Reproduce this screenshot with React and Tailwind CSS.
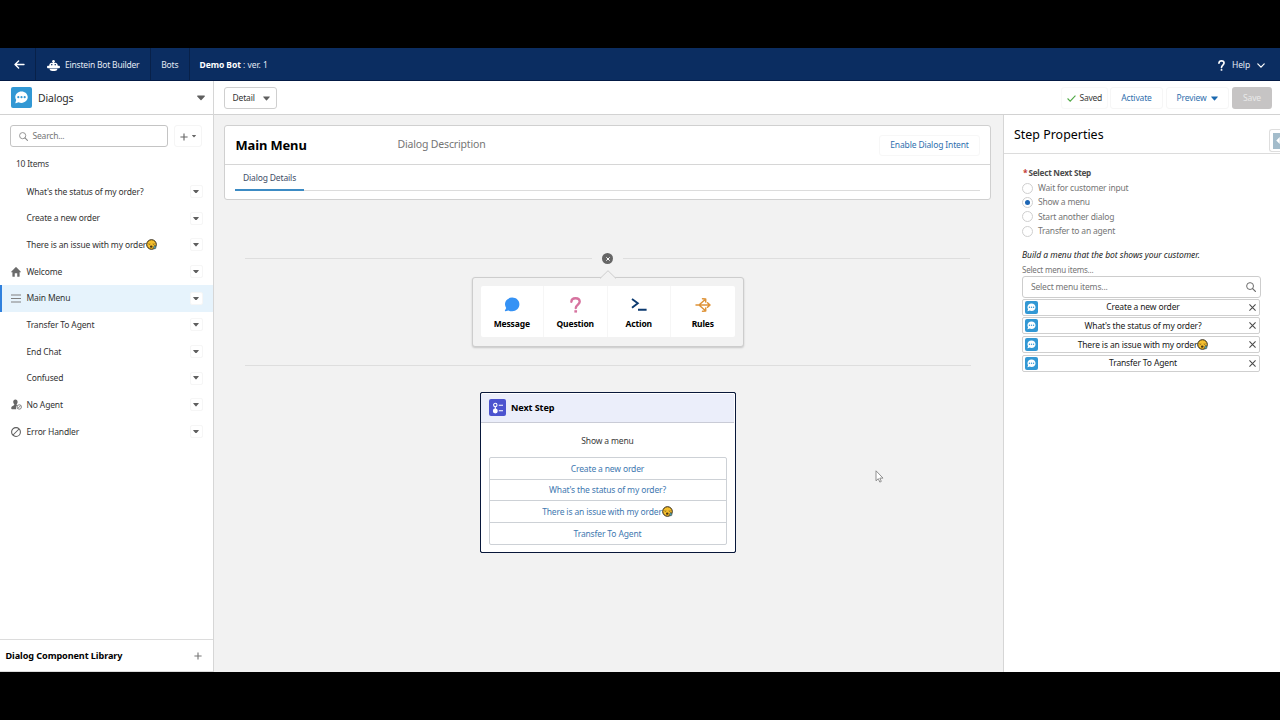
import React from "react";

function Caret({ className = "" }) {
  return (
    <svg viewBox="0 0 10 6" className={className} fill="currentColor">
      <path d="M0.8 0h8.4c.6 0 .9.6.5 1L5.6 5.6c-.3.4-.9.4-1.200 0L.3 1C-.1.6.2 0 .8 0z" />
    </svg>
  );
}

function Bubble({ className = "" }) {
  return (
    <svg viewBox="0 0 24 24" className={className}>
      <path fill="#fff" d="M12 3.500c-5 0-8.800 3.500-8.800 7.900 0 1.500.5 3 1.300 4.200l-1.200 4c-.1.400.2.700.600.600l4-1.500c1.200.6 2.600.9 4.100.9 5 0 8.800-3.700 8.800-8.200S17 3.500 12 3.500z" />
      <g fill="#3298d4">
        <circle cx="7.500" cy="11.500" r="1.500" />
        <circle cx="12" cy="11.500" r="1.500" />
        <circle cx="16.500" cy="11.500" r="1.500" />
      </g>
    </svg>
  );
}

function SleepyFace() {
  return (
    <svg viewBox="0 0 22 22" className="h-[11px] w-[11px] shrink-0" role="img" aria-label="😪">
      <circle cx="11" cy="11" r="9.600" fill="#f5bf2d" stroke="#2a2210" strokeWidth="2" />
      <path d="M5 9.800c1 .9 2.500.9 3.500 0M13.500 9.800c1 .9 2.500.9 3.500 0" stroke="#4a3a14" strokeWidth="1.400" fill="none" />
      <ellipse cx="10.500" cy="15.300" rx="2.600" ry="2.200" fill="#4a3410" />
      <path d="M17.500 12.500c1.700 2.300 2.500 3.500 2.500 4.700a2.500 2.500 0 0 1-5 0c0-1.200 1-2.400 2.500-4.700z" fill="#4f9cae" stroke="#2a2a20" strokeWidth=".8" />
    </svg>
  );
}

function SearchIcon({ className = "" }) {
  return (
    <svg viewBox="0 0 16 16" className={className} fill="none" stroke="currentColor">
      <circle cx="6.500" cy="6.500" r="5.500" strokeWidth="1.600" />
      <path d="M10.600 10.600L15 15" strokeWidth="1.900" strokeLinecap="round" />
    </svg>
  );
}

function PlusIcon({ className = "" }) {
  return (
    <svg viewBox="0 0 10 10" className={className} stroke="currentColor" strokeWidth="1.400">
      <path d="M5 .5v9M.5 5h9" />
    </svg>
  );
}

const ORDER_ISSUE = "There is an issue with my order";

const rowIcons = {
  home: (
    <svg viewBox="0 0 20 20" className="h-[10px] w-[10px]" fill="#6b6b6b">
      <path d="M10.800.6a1.200 1.200 0 0 0-1.600 0L.4 9.300c-.6.6-.2 1.200.4 1.200h2v7.800c0 .7.5 1.200 1.200 1.200h3.500v-6.200c0-.5.400-.8.800-.8h3.400c.5 0 .8.300.8.800v6.200H16c.7 0 1.200-.5 1.200-1.200v-7.800h2c.6 0 1-.6.4-1.200z" />
    </svg>
  ),
  menu: (
    <svg viewBox="0 0 10 9" className="h-[9px] w-[10px]" stroke="#808080" strokeWidth="1.100">
      <path d="M0 1h10M0 4.500h10M0 8h10" />
    </svg>
  ),
  agent: (
    <svg viewBox="0 0 20 20" className="h-[11px] w-[11px]">
      <path fill="#666" d="M8 1C5.500 1 4 2.900 4 5.400c0 1.700.8 3.300 1.900 4.300.4.900-.1 1.500-1.300 2C2.300 12.700.5 13.700.5 15.800v1.400c0 .7.500 1.300 1.300 1.300h7.700c-.8-3.200.3-6.200 2.300-7.400-1.600-.5-2-.7-1.700-1.400C11.200 8.700 12 7.100 12 5.400 12 2.900 10.500 1 8 1z" />
      <circle cx="15" cy="14.500" r="4" fill="none" stroke="#666" strokeWidth="1.400" />
      <path d="M12.500 17l5-5" stroke="#666" strokeWidth="1.400" />
    </svg>
  ),
  blocked: (
    <svg viewBox="0 0 20 20" className="h-[10px] w-[10px]" fill="none" stroke="#5c5c5c" strokeWidth="2.100">
      <circle cx="10" cy="10" r="8.800" />
      <path d="M4 16L16 4" />
    </svg>
  ),
};

const dialogs = [
  { label: "What's the status of my order?" },
  { label: "Create a new order" },
  { label: ORDER_ISSUE, face: true },
  { label: "Welcome", icon: "home" },
  { label: "Main Menu", icon: "menu", active: true },
  { label: "Transfer To Agent" },
  { label: "End Chat" },
  { label: "Confused" },
  { label: "No Agent", icon: "agent" },
  { label: "Error Handler", icon: "blocked" },
];

const menuItems = [
  { label: "Create a new order" },
  { label: "What's the status of my order?" },
  { label: ORDER_ISSUE, face: true },
  { label: "Transfer To Agent" },
];

function TopBar() {
  return (
    <header className="flex h-[33px] shrink-0 items-stretch border-b border-[#031a45] bg-[#0b2d61] text-[#e4eaf4]">
      <div className="flex w-[36px] items-center justify-center border-r border-[#082149] pt-px pl-[3px]">
        <svg viewBox="0 0 12 10" className="h-[9px] w-[11px]" fill="none" stroke="#fff" strokeWidth="1.500" strokeLinecap="round" strokeLinejoin="round">
          <path d="M11 5H1.200M5 1L1 5l4 4" />
        </svg>
      </div>
      <div className="flex w-[115px] items-center border-r border-[#082149] pt-[2px] pl-[11px]">
        <svg viewBox="0 0 26 22" className="mr-[5px] h-[11px] w-[13px]" fill="#fff">
          <circle cx="13" cy="2.600" r="2.600" />
          <path d="M12 3h2v4h-2z" />
          <path fillRule="evenodd" d="M10 5.500h6c3.500 0 5.500 2.500 5.500 5.500v1.500h-17V11C4.500 8 6.500 5.500 10 5.500zM9.500 8a1.600 1.600 0 1 0 0 3.200 1.600 1.600 0 0 0 0-3.200zm7 0a1.600 1.600 0 1 0 0 3.200 1.600 1.600 0 0 0 0-3.200z" />
          <path d="M2.500 11.500h21c1.500 0 2.500 1 2.500 2.500s-1 2.500-2.500 2.500h-21C1 16.500 0 15.500 0 14s1-2.500 2.500-2.500zM5 17.500h16c-.6 2.800-2.600 4.500-5.500 4.500h-5C7.600 22 5.600 20.300 5 17.500z" />
        </svg>
        <span className="tracking-[-0.200px]">Einstein Bot Builder</span>
      </div>
      <div className="flex w-[38.500px] items-center justify-center border-r border-[#082149] pt-[2px]">Bots</div>
      <div className="flex flex-1 items-center whitespace-pre pt-[2px] pl-[10px] tracking-[-0.050px]">
        <b className="text-white">Demo Bot</b> : ver. 1
      </div>
      <div className="flex items-center pt-[2px] pr-[15px]">
        <svg viewBox="0 0 10 16" className="mr-[7px] h-[11px] w-[7px]" fill="none" stroke="#fff" strokeWidth="2.400">
          <path d="M1.300 4.500C1.500 2.500 3 1.300 5 1.300s3.700 1.200 3.700 3.200C8.700 7.300 5 7.500 5 11" strokeLinecap="round" />
          <path d="M5 13.200v2.400" />
        </svg>
        <span>Help</span>
        <svg viewBox="0 0 10 6" className="ml-[7px] h-[5px] w-[8px]" fill="none" stroke="#fff" strokeWidth="1.500" strokeLinecap="round">
          <path d="M1 1l4 4 4-4" />
        </svg>
      </div>
    </header>
  );
}

function Sidebar() {
  return (
    <aside className="flex w-[214px] shrink-0 flex-col border-r border-[#d6d6d6] bg-white">
      <div className="flex h-[34px] shrink-0 items-center border-b border-[#d2d2d2] pr-[8.500px] pl-[11px]">
        <span className="flex h-[21px] w-[21px] items-center justify-center rounded-[2px] bg-[#3298d4]">
          <Bubble className="h-[17px] w-[17px]" />
        </span>
        <span className="ml-[6px] flex-1 text-[10.400px] tracking-[-0.150px] text-[#2b2b2b]">Dialogs</span>
        <Caret className="h-[6px] w-[8px] text-[#5f5f5f]" />
      </div>
      <div className="mt-[10px] flex items-center pl-[10px]">
        <div className="flex h-[22px] w-[158px] items-center rounded-[3px] border border-[#c4c4c4] pl-[8px] tracking-[-0.200px] text-[#757575]">
          <SearchIcon className="mr-[4.500px] h-[9px] w-[9px] text-[#8a8a8a]" />
          Search...
        </div>
        <div className="ml-[6px] flex h-[22px] w-[28px] items-center justify-center rounded-[3px] border border-[#f5f5f5] pt-px text-[#666]">
          <PlusIcon className="mr-[4px] h-[8px] w-[8px]" />
          <Caret className="h-[2.500px] w-[4px]" />
        </div>
      </div>
      <div className="mt-[9px] h-[16px] pl-[16px] leading-[16px] tracking-[-0.250px] text-[#3a3a3a]">10 Items</div>
      <ul className="mt-[6.300px]">
        {dialogs.map((d) => (
          <li
            key={d.label}
            className={
              "flex h-[26.670px] items-center border-l-[2.500px] pr-[10.500px] pl-[9px] " +
              (d.active ? "border-[#2f80dd] bg-[#e6f3fc]" : "border-transparent")
            }
          >
            <span className="flex w-[15.500px] items-center">{d.icon && rowIcons[d.icon]}</span>
            <span className="flex flex-1 items-center">
              {d.label}
              {d.face && <SleepyFace />}
            </span>
            <span className="flex h-[13px] w-[13px] items-center justify-center rounded-[2px] border border-[#f6f6f6] bg-white text-[#5f5f5f]">
              <Caret className="h-[3.500px] w-[6px]" />
            </span>
          </li>
        ))}
      </ul>
      <div className="mt-auto flex h-[33px] items-center justify-between border-y border-t-[#dcdcdc] border-b-[#dcdcdc] pr-[11px] pl-[5.500px]">
        <b className="text-[9.100px] tracking-[-0.080px] text-black">Dialog Component Library</b>
        <PlusIcon className="h-[8px] w-[8px] text-[#777]" />
      </div>
    </aside>
  );
}

function Toolbar() {
  return (
    <div className="flex h-[34px] shrink-0 items-center border-b border-[#d2d2d2] bg-white pr-[8px] pl-[10px]">
      <div className="flex h-[22px] w-[53px] items-center justify-between rounded-[3px] border border-[#cfcfcf] pt-px pr-[6px] pl-[7.500px]">
        Detail
        <Caret className="h-[5px] w-[7px] text-[#5f5f5f]" />
      </div>
      <div className="ml-auto flex h-[22px] text-[#2f6fae]">
        <div className="flex w-[47px] items-center justify-end rounded-[3px] border border-[#f8f8f8] pt-px pr-[5px] tracking-[-0.250px] text-[#3a3a3a]">
          <svg viewBox="0 0 10 8" className="mr-[3px] h-[7px] w-[9px]" fill="none" stroke="#4fa845" strokeWidth="1.300">
            <path d="M.5 4l3 3L9.500.8" />
          </svg>
          Saved
        </div>
        <div className="ml-[2px] flex w-[53px] items-center justify-center rounded-[3px] border border-[#f6f6f6] pt-px">Activate</div>
        <div className="ml-[3px] flex w-[63px] items-center justify-center rounded-[3px] border border-[#f6f6f6] pt-px">
          Preview
          <Caret className="ml-[5px] h-[5px] w-[7px] text-[#1b69b0]" />
        </div>
        <div className="ml-[3px] flex w-[40px] items-center justify-center rounded-[3px] bg-[#c6c4c4] pt-px text-[#e9e9e9]">Save</div>
      </div>
    </div>
  );
}

const stepTypes = [
  {
    label: "Message",
    icon: (
      <svg viewBox="0 0 16 15" className="h-[15px] w-[16px]" fill="#3592f5">
        <path d="M8.200.6C4.200.6 1 3.500 1 7.100c0 1.400.5 2.800 1.200 3.900L.9 13.600c-.2.400.1.800.6.700l2.900-.9c1.100.6 2.400.9 3.800.9 4 0 7.200-3.200 7.200-7S12.200.6 8.200.6z" />
      </svg>
    ),
  },
  {
    label: "Question",
    icon: (
      <svg viewBox="0 0 11 16" className="h-[16px] w-[11px]" fill="none" stroke="#d6739f" strokeWidth="2.400">
        <path d="M1.400 4.700C1.500 2.400 3.200 1.300 5.500 1.300S9.700 2.600 9.700 4.800C9.700 7.400 6 7.800 5.800 11" strokeLinecap="round" />
        <path d="M5.700 13.200v2.400" strokeWidth="2.700" />
      </svg>
    ),
  },
  {
    label: "Action",
    icon: (
      <svg viewBox="0 0 16 13" className="h-[13px] w-[16px]" fill="none" stroke="#0c3a70" strokeWidth="1.900">
        <path d="M1 1l5.800 4.300L1 9.700M7 11.700h8.600" />
      </svg>
    ),
  },
  {
    label: "Rules",
    icon: (
      <svg viewBox="0 0 16 16" className="h-[16px] w-[16px]" fill="none" stroke="#de9338" strokeWidth="1.500" strokeLinecap="round" strokeLinejoin="round">
        <path d="M1 8h13.500M12.500 5.700L15 8l-2.500 2.300M4 8l6.500-5.800M7.500 1.700l3.200.2v3M4 8l6.500 5.800M7.500 14.300l3.200-.2v-3" />
      </svg>
    ),
  },
];

function Canvas() {
  return (
    <main className="flex min-w-0 flex-1 flex-col bg-[#f2f2f2] pt-[10px] pr-[12px] pl-[10px]">
      <section className="h-[75px] shrink-0 rounded-[3px] border border-[#d0d0d0] bg-white">
        <div className="flex h-[39px] items-center border-b border-[#d6d6d6] pr-[10px] pl-[10.500px]">
          <b className="w-[162px] text-[12.900px] tracking-[-0.100px] text-black">Main Menu</b>
          <span className="flex-1 pb-[3px] text-[10.500px] tracking-[-0.170px] text-[#757575]">Dialog Description</span>
          <span className="flex h-[21px] w-[101px] items-center justify-center rounded-[3px] border border-[#f7f7f7] text-[#2f6fae]">Enable Dialog Intent</span>
        </div>
        <div className="mx-[10px] flex h-[26px] border-b border-[#dcdcdc]">
          <span className="-mb-px flex w-[69px] items-center justify-center border-b-2 border-[#3c8bc4] pt-px text-[#3e4d66]">Dialog Details</span>
        </div>
      </section>

      <div className="mt-[50px] flex h-[17px] items-center justify-center">
        <span className="h-px w-[347px] bg-[#dedede]" />
        <span className="mx-[10px] flex h-[11px] w-[11px] items-center justify-center rounded-full bg-[#666]">
          <svg viewBox="0 0 6 6" className="h-[4px] w-[4px]" stroke="#fff" strokeWidth="1.500">
            <path d="M.5.5l5 5M5.500.5l-5 5" />
          </svg>
        </span>
        <span className="h-px w-[347px] bg-[#dedede]" />
      </div>

      <div className="relative mx-auto mt-[10px] h-[70px] w-[272px] rounded-[3px] border border-[#cdcdcd] bg-[#f2f2f2] p-[8px] shadow-[0_1px_2px_rgba(0,0,0,0.180)]">
        <svg viewBox="0 0 16 9" className="absolute -top-[8.500px] left-[127px] h-[9px] w-[16px]">
          <path d="M0 8.500L8 .7l8 7.800" fill="#f2f2f2" stroke="#cdcdcd" />
        </svg>
        <div className="grid h-[51px] grid-cols-4 divide-x divide-[#f6f6f6] rounded-[2px] bg-white">
          {stepTypes.map((s) => (
            <div key={s.label} className="flex flex-col items-center pt-[10px]">
              <span className="flex h-[17px] items-center">{s.icon}</span>
              <b className="mt-[5px] leading-[12px] text-black">{s.label}</b>
            </div>
          ))}
        </div>
      </div>

      <div className="mx-auto mt-[18px] h-px w-[726px] shrink-0 bg-[#dedede]" />

      <section className="mx-auto mt-[26px] h-[161px] w-[256px] shrink-0 rounded-[2px] border-[1.500px] border-[#08183a] bg-white outline outline-[#08183a]/60 -outline-offset-[1.500px]">
        <div className="m-[0.500px] flex h-[29.500px] items-center border-b border-[#c9cbd6] bg-[#ebeefa] pl-[8px]">
          <span className="flex h-[17px] w-[17px] items-center justify-center rounded-[2px] bg-[#4b53cf]">
            <svg viewBox="0 0 12 12" className="h-[12px] w-[12px]" fill="none" stroke="#fff" strokeWidth="1.100">
              <circle cx="3.300" cy="3" r="1.700" />
              <circle cx="3.300" cy="9" r="1.900" fill="#fff" />
              <path d="M3.300 4.700v3M6.800 3.200H11M6.800 8.800H11" />
            </svg>
          </span>
          <b className="ml-[5px] text-[9.100px] tracking-[-0.100px] text-black">Next Step</b>
        </div>
        <div className="flex h-[33.500px] items-center justify-center pt-px text-[#3a3a3a]">Show a menu</div>
        <ul className="mx-[8px] divide-y divide-[#cdd1d6] rounded-[2px] border border-[#cdd1d6]">
          {menuItems.map((m) => (
            <li key={m.label} className="flex h-[21.600px] items-center justify-center pt-[0.700px] text-[#4178b0]">
              {m.label}
              {m.face && <SleepyFace />}
            </li>
          ))}
        </ul>
      </section>
    </main>
  );
}

const choices = ["Wait for customer input", "Show a menu", "Start another dialog", "Transfer to an agent"];

function Properties() {
  return (
    <aside className="relative w-[277px] shrink-0 overflow-hidden border-l border-[#d6d6d6] bg-white">
      <div className="flex h-[39px] items-center border-b border-[#dcdcdc] pt-px pl-[10px] text-[12.400px] tracking-[0.020px] text-black">Step Properties</div>
      <div className="absolute top-[14px] right-0 flex h-[23px] w-[11px] items-center rounded-l-[3px] border border-r-0 border-[#dedede] bg-white pl-[3px]">
        <span className="flex h-[16px] w-[8px] items-center justify-end bg-[#a3bccb]">
          <svg viewBox="0 0 4 8" className="h-[7px] w-[4px]" fill="#fff">
            <path d="M4 0v8L0 4z" />
          </svg>
        </span>
      </div>
      <div className="pt-[12.500px] pr-[19px] pl-[18px]">
        <div className="mb-[1.500px] flex h-[13px] items-center pl-[1px] text-[#4c4c4c]">
          <b className="mr-[1px] text-[#c23934]">*</b>
          <b className="text-[8.200px] tracking-[-0.250px]">Select Next Step</b>
        </div>
        {choices.map((c) => (
          <div key={c} className="flex h-[14.330px] items-center tracking-[-0.190px] text-[#757575]">
            <span className="mr-[5px] flex h-[11px] w-[11px] items-center justify-center rounded-full border border-[#cfcfcf]">
              {c === "Show a menu" && <span className="h-[5px] w-[5px] rounded-full bg-[#1d66b5]" />}
            </span>
            {c}
          </div>
        ))}
        <div className="mt-[9.500px] h-[14px] leading-[14px] tracking-[-0.040px] text-[#1c1c1c] italic">Build a menu that the bot shows your customer.</div>
        <div className="mt-[1.200px] h-[13px] text-[8px] leading-[13px] tracking-[-0.200px] text-[#757575]">Select menu items...</div>
        <div className="flex h-[22px] w-[239px] items-center justify-between rounded-[3px] border border-[#cdcdcd] pr-[4px] pl-[8px] tracking-[-0.180px] text-[#757575]">
          Select menu items...
          <SearchIcon className="h-[10px] w-[10px] text-[#6a6a6a]" />
        </div>
        <div className="mt-[0.800px] flex flex-col gap-[1.670px]">
          {menuItems.map((m) => (
            <div key={m.label} className="flex h-[17px] w-[238px] items-center rounded-[2px] border border-[#cfcfcf] pr-[3px] pl-[2px] text-[#202020]">
              <span className="flex h-[13px] w-[13px] items-center justify-center rounded-[2px] bg-[#3298d4]">
                <Bubble className="h-[11px] w-[11px]" />
              </span>
              <span className="flex flex-1 items-center justify-center pr-px">
                {m.label}
                {m.face && <SleepyFace />}
              </span>
              <svg viewBox="0 0 8 8" className="h-[7px] w-[7px]" stroke="#4a4a4a" strokeWidth="1.200">
                <path d="M.5.5l7 7M7.500.5l-7 7" />
              </svg>
            </div>
          ))}
        </div>
      </div>
    </aside>
  );
}

export default function App() {
  return (
    <div className="relative flex h-[720px] w-[1280px] flex-col overflow-hidden bg-black pt-[48px] pb-[48px] font-['Noto_Sans','Open_Sans',sans-serif] text-[8.500px] leading-[14px] tracking-[-0.150px] text-[#333]">
      <TopBar />
      <div className="flex min-h-0 flex-1">
        <Sidebar />
        <div className="flex min-w-0 flex-1 flex-col">
          <Toolbar />
          <div className="flex min-h-0 flex-1">
            <Canvas />
            <Properties />
          </div>
        </div>
      </div>
      <svg viewBox="0 0 9 13" className="absolute top-[470px] left-[875px] h-[13px] w-[9px]">
        <path d="M1 .8v10l2.300-2.100 1.500 3.400 1.500-.7-1.500-3.300H8z" fill="#fff" stroke="#777" strokeWidth=".8" />
      </svg>
    </div>
  );
}
